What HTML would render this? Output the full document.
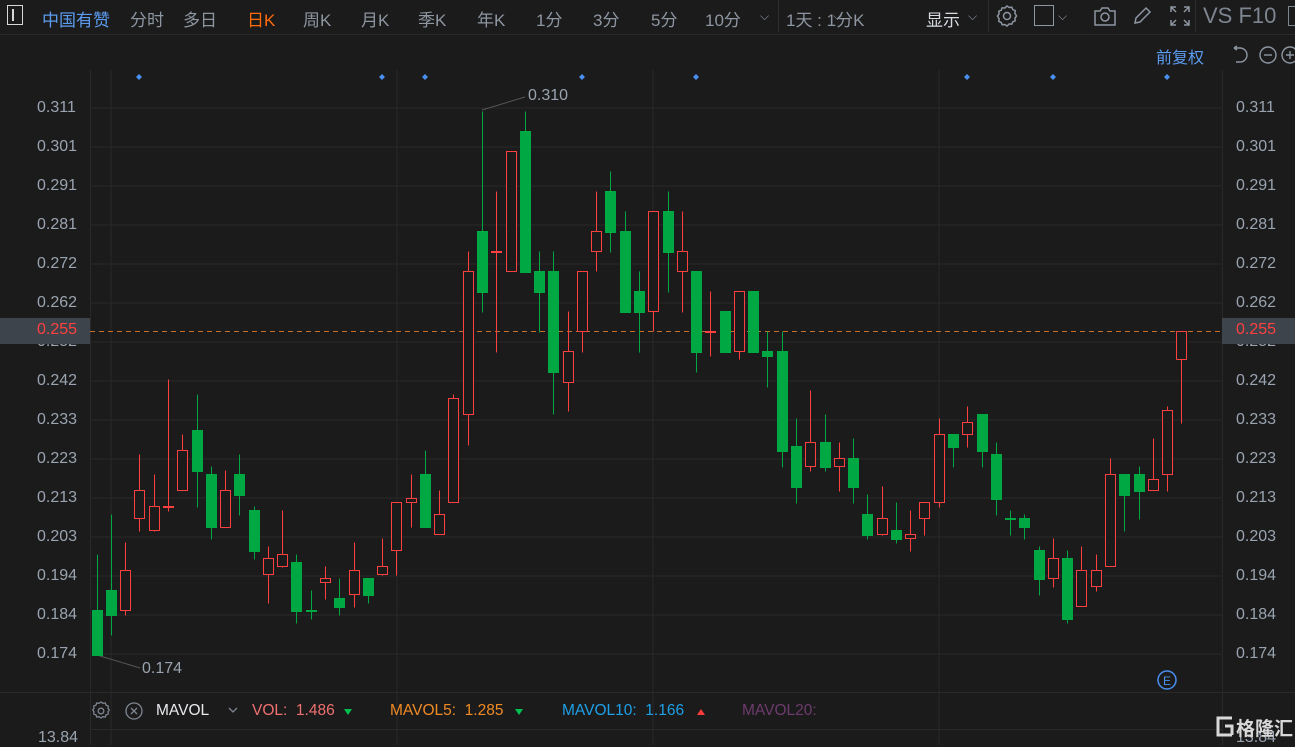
<!DOCTYPE html>
<html><head><meta charset="utf-8"><style>
*{margin:0;padding:0;box-sizing:border-box}
body{width:1295px;height:745px;background:#1b1b1b;overflow:hidden;position:relative;font-family:"Liberation Sans","Noto Sans CJK SC",sans-serif;color:#9aa3ae}
.t{position:absolute;white-space:nowrap}
.top{font-size:17px;top:6px;color:#8d96a1}
.ax{font-size:16px;color:#9aa4b0}
</style></head><body>
<div style="position:absolute;left:0;top:34px;width:1295px;height:1px;background:#2a2a2a"></div>
<div style="position:absolute;left:7px;top:5px;width:16px;height:20px;border:1.5px solid #d8d8d8"></div>
<div style="position:absolute;left:12px;top:9px;width:1.5px;height:12px;background:#d8d8d8"></div>
<div class="t top" style="left:42px;color:#5b9cf0">中国有赞</div>
<div class="t top" style="left:130px">分时</div>
<div class="t top" style="left:183px">多日</div>
<div class="t top" style="left:247px;color:#ff6a0a">日K</div>
<div class="t top" style="left:303px">周K</div>
<div class="t top" style="left:361px">月K</div>
<div class="t top" style="left:418px">季K</div>
<div class="t top" style="left:477px">年K</div>
<div class="t top" style="left:536px">1分</div>
<div class="t top" style="left:593px">3分</div>
<div class="t top" style="left:651px">5分</div>
<div class="t top" style="left:705px">10分</div>
<div class="t top" style="left:760px;font-size:12px;top:9px">⌵</div>
<div style="position:absolute;left:778px;top:0;width:1px;height:32px;background:#2e2e2e"></div>
<div class="t top" style="left:786px">1天 : 1分K</div>
<div class="t top" style="left:833px;font-size:12px;top:9px">⌵</div>
<div class="t top" style="left:926px;color:#d8dce2">显示</div>
<div class="t top" style="left:968px;font-size:12px;top:9px">⌵</div>
<div style="position:absolute;left:988px;top:0;width:1px;height:32px;background:#2e2e2e"></div>
<svg style="position:absolute;left:995px;top:4px" width="24" height="24" viewBox="0 0 24 24" fill="none" stroke="#8d96a1" stroke-width="1.5"><path d="M12 2l2.2 1.5 2.6-.3 1 2.4 2.4 1-.3 2.6L21.5 12l-1.6 2.2.3 2.6-2.4 1-1 2.4-2.6-.3L12 22l-2.2-1.5-2.6.3-1-2.4-2.4-1 .3-2.6L2.5 12l1.6-2.2-.3-2.6 2.4-1 1-2.4 2.6.3z"/><circle cx="12" cy="12" r="3.5"/></svg>
<div style="position:absolute;left:1034px;top:5px;width:20px;height:21px;border:1.5px solid #8d96a1"></div>
<div class="t top" style="left:1058px;font-size:12px;top:9px">⌵</div>
<svg style="position:absolute;left:1093px;top:5px" width="24" height="22" viewBox="0 0 24 22" fill="none" stroke="#8d96a1" stroke-width="1.5"><path d="M2 6h5l2-3h6l2 3h5v14H2z"/><circle cx="12" cy="12" r="4"/></svg>
<svg style="position:absolute;left:1131px;top:5px" width="22" height="22" viewBox="0 0 22 22" fill="none" stroke="#8d96a1" stroke-width="1.5"><path d="M4 18l1-5L15 3l4 4L9 17z"/></svg>
<svg style="position:absolute;left:1169px;top:5px" width="22" height="22" viewBox="0 0 22 22" fill="none" stroke="#8d96a1" stroke-width="1.5"><path d="M2 7V2h5M2 2l5 5M20 7V2h-5M20 2l-5 5M2 15v5h5M2 20l5-5M20 15v5h-5M20 20l-5-5"/></svg>
<div style="position:absolute;left:1195px;top:0;width:1px;height:32px;background:#2e2e2e"></div>
<div class="t" style="left:1203px;top:3px;font-size:22px;color:#7d8590">VS F10</div>
<div style="position:absolute;left:1288px;top:6px;width:12px;height:20px;border:1.5px solid #7d8590"></div>

<div class="t" style="left:1156px;top:44px;font-size:16px;color:#5b9cf0">前复权</div>
<svg style="position:absolute;left:1228px;top:44px" width="70" height="22" viewBox="0 0 70 22" fill="none" stroke="#8d96a1" stroke-width="1.4"><path d="M6 4h6a7 7 0 0 1 0 14H8"/><path d="M6 4l3-2M6 4l3 2"/><circle cx="40" cy="11" r="8"/><path d="M36 11h8"/><circle cx="62" cy="11" r="8"/><path d="M58 11h8M62 7v8"/></svg>

<svg style="position:absolute;left:0;top:0" width="1295" height="745">
<g stroke="#292929" stroke-width="1" shape-rendering="crispEdges">
<line x1="90" y1="108" x2="1222" y2="108"/><line x1="90" y1="147" x2="1222" y2="147"/><line x1="90" y1="186" x2="1222" y2="186"/><line x1="90" y1="225" x2="1222" y2="225"/><line x1="90" y1="264" x2="1222" y2="264"/><line x1="90" y1="303" x2="1222" y2="303"/><line x1="90" y1="342" x2="1222" y2="342"/><line x1="90" y1="381" x2="1222" y2="381"/><line x1="90" y1="420" x2="1222" y2="420"/><line x1="90" y1="459" x2="1222" y2="459"/><line x1="90" y1="498" x2="1222" y2="498"/><line x1="90" y1="537" x2="1222" y2="537"/><line x1="90" y1="576" x2="1222" y2="576"/><line x1="90" y1="615" x2="1222" y2="615"/><line x1="90" y1="654" x2="1222" y2="654"/>
<line x1="111" y1="70" x2="111" y2="745"/><line x1="397" y1="70" x2="397" y2="745"/><line x1="653" y1="70" x2="653" y2="745"/><line x1="939" y1="70" x2="939" y2="745"/>
<line x1="90.5" y1="70" x2="90.5" y2="745"/><line x1="1222.5" y1="70" x2="1222.5" y2="745"/>
<line x1="0" y1="692.5" x2="1295" y2="692.5"/><line x1="90" y1="729.5" x2="1222" y2="729.5"/>
</g>
<g fill="#4a8ff0">
<path d="M139 74l3 3-3 3-3-3z"/><path d="M382 74l3 3-3 3-3-3z"/><path d="M425 74l3 3-3 3-3-3z"/><path d="M582 74l3 3-3 3-3-3z"/><path d="M696 74l3 3-3 3-3-3z"/><path d="M967 74l3 3-3 3-3-3z"/><path d="M1053 74l3 3-3 3-3-3z"/><path d="M1167 74l3 3-3 3-3-3z"/>
</g>
<line x1="0" y1="331.5" x2="1222" y2="331.5" stroke="#c8702a" stroke-dasharray="5,4" stroke-width="1"/>
<line x1="482" y1="110" x2="525" y2="97" stroke="#555"/>
<line x1="97" y1="655" x2="140" y2="668" stroke="#555"/>
<g stroke="#00a843" stroke-width="1" fill="#00a843" shape-rendering="crispEdges" transform="translate(0.5,0.5)">
<line x1="97" y1="554" x2="97" y2="655"/><rect x="92" y="610" width="10" height="45"/>
<line x1="111" y1="514" x2="111" y2="635"/><rect x="106" y="590" width="10" height="25"/>
<line x1="197" y1="394" x2="197" y2="507"/><rect x="192" y="430" width="10" height="41"/>
<line x1="211" y1="466" x2="211" y2="539"/><rect x="206" y="474" width="10" height="53"/>
<line x1="239" y1="454" x2="239" y2="515"/><rect x="234" y="474" width="10" height="21"/>
<line x1="254" y1="506" x2="254" y2="559"/><rect x="249" y="510" width="10" height="41"/>
<line x1="296" y1="554" x2="296" y2="623"/><rect x="291" y="562" width="10" height="49"/>
<line x1="311" y1="590" x2="311" y2="619"/><rect x="306" y="610" width="10" height="1"/>
<line x1="339" y1="578" x2="339" y2="615"/><rect x="334" y="598" width="10" height="9"/>
<line x1="368" y1="578" x2="368" y2="603"/><rect x="363" y="578" width="10" height="17"/>
<line x1="425" y1="450" x2="425" y2="527"/><rect x="420" y="474" width="10" height="53"/>
<line x1="482" y1="111" x2="482" y2="312"/><rect x="477" y="231" width="10" height="61"/>
<line x1="525" y1="111" x2="525" y2="272"/><rect x="520" y="131" width="10" height="141"/>
<line x1="539" y1="251" x2="539" y2="332"/><rect x="534" y="271" width="10" height="21"/>
<line x1="553" y1="251" x2="553" y2="414"/><rect x="548" y="271" width="10" height="101"/>
<line x1="610" y1="171" x2="610" y2="252"/><rect x="605" y="191" width="10" height="41"/>
<line x1="625" y1="211" x2="625" y2="312"/><rect x="620" y="231" width="10" height="81"/>
<line x1="639" y1="271" x2="639" y2="352"/><rect x="634" y="291" width="10" height="21"/>
<line x1="668" y1="191" x2="668" y2="292"/><rect x="663" y="211" width="10" height="41"/>
<line x1="696" y1="271" x2="696" y2="372"/><rect x="691" y="271" width="10" height="81"/>
<rect x="720" y="311" width="10" height="41"/>
<rect x="748" y="291" width="10" height="61"/>
<line x1="767" y1="331" x2="767" y2="387"/><rect x="762" y="351" width="10" height="5"/>
<line x1="782" y1="331" x2="782" y2="467"/><rect x="777" y="351" width="10" height="100"/>
<line x1="796" y1="418" x2="796" y2="503"/><rect x="791" y="446" width="10" height="41"/>
<line x1="825" y1="414" x2="825" y2="471"/><rect x="820" y="442" width="10" height="25"/>
<line x1="853" y1="438" x2="853" y2="503"/><rect x="848" y="458" width="10" height="29"/>
<line x1="867" y1="494" x2="867" y2="539"/><rect x="862" y="514" width="10" height="21"/>
<line x1="896" y1="502" x2="896" y2="543"/><rect x="891" y="530" width="10" height="9"/>
<line x1="953" y1="434" x2="953" y2="467"/><rect x="948" y="434" width="10" height="13"/>
<line x1="982" y1="414" x2="982" y2="467"/><rect x="977" y="414" width="10" height="37"/>
<line x1="996" y1="442" x2="996" y2="515"/><rect x="991" y="454" width="10" height="45"/>
<line x1="1010" y1="510" x2="1010" y2="535"/><rect x="1005" y="518" width="10" height="1"/>
<line x1="1024" y1="514" x2="1024" y2="539"/><rect x="1019" y="518" width="10" height="9"/>
<line x1="1039" y1="546" x2="1039" y2="595"/><rect x="1034" y="550" width="10" height="29"/>
<line x1="1067" y1="550" x2="1067" y2="623"/><rect x="1062" y="558" width="10" height="61"/>
<line x1="1124" y1="474" x2="1124" y2="531"/><rect x="1119" y="474" width="10" height="21"/>
<line x1="1139" y1="466" x2="1139" y2="519"/><rect x="1134" y="474" width="10" height="17"/>
</g>
<g stroke="#ff4040" stroke-width="1" fill="#1b1b1b" shape-rendering="crispEdges" transform="translate(0.5,0.5)">
<line x1="125" y1="542" x2="125" y2="615"/><rect x="120" y="570" width="10" height="40"/>
<line x1="139" y1="454" x2="139" y2="531"/><rect x="134" y="490" width="10" height="28"/>
<line x1="154" y1="474" x2="154" y2="531"/><rect x="149" y="506" width="10" height="24"/>
<line x1="168" y1="379" x2="168" y2="511"/><rect x="163" y="506" width="10" height="1"/>
<line x1="182" y1="434" x2="182" y2="490"/><rect x="177" y="450" width="10" height="40"/>
<line x1="225" y1="470" x2="225" y2="527"/><rect x="220" y="490" width="10" height="37"/>
<line x1="268" y1="546" x2="268" y2="603"/><rect x="263" y="558" width="10" height="16"/>
<line x1="282" y1="510" x2="282" y2="567"/><rect x="277" y="554" width="10" height="12"/>
<line x1="325" y1="566" x2="325" y2="599"/><rect x="320" y="578" width="10" height="4"/>
<line x1="354" y1="542" x2="354" y2="607"/><rect x="349" y="570" width="10" height="24"/>
<line x1="382" y1="538" x2="382" y2="575"/><rect x="377" y="566" width="10" height="8"/>
<line x1="396" y1="502" x2="396" y2="575"/><rect x="391" y="502" width="10" height="48"/>
<line x1="411" y1="474" x2="411" y2="527"/><rect x="406" y="498" width="10" height="4"/>
<line x1="439" y1="490" x2="439" y2="534"/><rect x="434" y="514" width="10" height="20"/>
<line x1="453" y1="394" x2="453" y2="502"/><rect x="448" y="398" width="10" height="104"/>
<line x1="468" y1="251" x2="468" y2="445"/><rect x="463" y="271" width="10" height="143"/>
<line x1="496" y1="191" x2="496" y2="352"/><rect x="491" y="251" width="10" height="1"/>
<rect x="506" y="151" width="10" height="120"/>
<line x1="568" y1="311" x2="568" y2="411"/><rect x="563" y="351" width="10" height="31"/>
<line x1="582" y1="271" x2="582" y2="352"/><rect x="577" y="271" width="10" height="60"/>
<line x1="596" y1="191" x2="596" y2="271"/><rect x="591" y="231" width="10" height="20"/>
<line x1="653" y1="211" x2="653" y2="331"/><rect x="648" y="211" width="10" height="100"/>
<line x1="682" y1="211" x2="682" y2="312"/><rect x="677" y="251" width="10" height="20"/>
<line x1="710" y1="291" x2="710" y2="356"/><rect x="705" y="331" width="10" height="1"/>
<line x1="739" y1="291" x2="739" y2="359"/><rect x="734" y="291" width="10" height="60"/>
<line x1="810" y1="390" x2="810" y2="471"/><rect x="805" y="442" width="10" height="24"/>
<line x1="839" y1="442" x2="839" y2="491"/><rect x="834" y="458" width="10" height="8"/>
<line x1="882" y1="486" x2="882" y2="535"/><rect x="877" y="518" width="10" height="16"/>
<line x1="910" y1="510" x2="910" y2="551"/><rect x="905" y="534" width="10" height="4"/>
<line x1="924" y1="502" x2="924" y2="535"/><rect x="919" y="502" width="10" height="16"/>
<line x1="939" y1="418" x2="939" y2="507"/><rect x="934" y="434" width="10" height="68"/>
<line x1="967" y1="406" x2="967" y2="447"/><rect x="962" y="422" width="10" height="12"/>
<line x1="1053" y1="538" x2="1053" y2="587"/><rect x="1048" y="558" width="10" height="20"/>
<line x1="1081" y1="546" x2="1081" y2="606"/><rect x="1076" y="570" width="10" height="36"/>
<line x1="1096" y1="554" x2="1096" y2="591"/><rect x="1091" y="570" width="10" height="16"/>
<line x1="1110" y1="458" x2="1110" y2="566"/><rect x="1105" y="474" width="10" height="92"/>
<line x1="1153" y1="438" x2="1153" y2="490"/><rect x="1148" y="479" width="10" height="11"/>
<line x1="1167" y1="406" x2="1167" y2="491"/><rect x="1162" y="410" width="10" height="64"/>
<line x1="1181" y1="331" x2="1181" y2="423"/><rect x="1176" y="331" width="10" height="28"/>
</g>
<circle cx="1167" cy="680" r="9" fill="none" stroke="#4a8ff0" stroke-width="1.5"/>
<text x="1167" y="685" fill="#4a8ff0" font-size="12" text-anchor="middle" font-family="Liberation Sans">E</text>
<g fill="none" stroke="#7d8590" stroke-width="1.3">
<path d="M101 702l2 1.3 2.3-.3.8 2.2 2.2.8-.3 2.3 1.3 1.7-1.3 1.7.3 2.3-2.2.8-.8 2.2-2.3-.3-2 1.3-2-1.3-2.3.3-.8-2.2-2.2-.8.3-2.3-1.3-1.7 1.3-1.7-.3-2.3 2.2-.8.8-2.2 2.3.3z"/><circle cx="101" cy="711" r="2.8"/>
<circle cx="134" cy="711" r="8"/><path d="M131 708l6 6M137 708l-6 6"/>
<path d="M229 708l4 4 4-4"/>
</g>
<path d="M344 709h8l-4 6z" fill="#00c050"/><path d="M515 709h8l-4 6z" fill="#00c050"/><path d="M697 715h8l-4-6z" fill="#ff3b3b"/>
<path d="M1232 718h-14v17h14" fill="none" stroke="#d8d8d8" stroke-width="3"/><path d="M1225 726h7v9" fill="none" stroke="#d8d8d8" stroke-width="3"/>
</svg>
<div class="t ax" style="left:37px;top:99px">0.311</div><div class="t ax" style="left:1236px;top:99px">0.311</div>
<div class="t ax" style="left:37px;top:138px">0.301</div><div class="t ax" style="left:1236px;top:138px">0.301</div>
<div class="t ax" style="left:37px;top:177px">0.291</div><div class="t ax" style="left:1236px;top:177px">0.291</div>
<div class="t ax" style="left:37px;top:216px">0.281</div><div class="t ax" style="left:1236px;top:216px">0.281</div>
<div class="t ax" style="left:37px;top:255px">0.272</div><div class="t ax" style="left:1236px;top:255px">0.272</div>
<div class="t ax" style="left:37px;top:294px">0.262</div><div class="t ax" style="left:1236px;top:294px">0.262</div>
<div class="t ax" style="left:37px;top:333px">0.252</div><div class="t ax" style="left:1236px;top:333px">0.252</div>
<div class="t ax" style="left:37px;top:372px">0.242</div><div class="t ax" style="left:1236px;top:372px">0.242</div>
<div class="t ax" style="left:37px;top:411px">0.233</div><div class="t ax" style="left:1236px;top:411px">0.233</div>
<div class="t ax" style="left:37px;top:450px">0.223</div><div class="t ax" style="left:1236px;top:450px">0.223</div>
<div class="t ax" style="left:37px;top:489px">0.213</div><div class="t ax" style="left:1236px;top:489px">0.213</div>
<div class="t ax" style="left:37px;top:528px">0.203</div><div class="t ax" style="left:1236px;top:528px">0.203</div>
<div class="t ax" style="left:37px;top:567px">0.194</div><div class="t ax" style="left:1236px;top:567px">0.194</div>
<div class="t ax" style="left:37px;top:606px">0.184</div><div class="t ax" style="left:1236px;top:606px">0.184</div>
<div class="t ax" style="left:37px;top:645px">0.174</div><div class="t ax" style="left:1236px;top:645px">0.174</div>
<div style="position:absolute;left:0;top:318px;width:90px;height:26px;background:#3d444b"></div>
<div class="t ax" style="left:37px;top:321px;color:#ff4040">0.255</div>
<div style="position:absolute;left:1222px;top:318px;width:73px;height:26px;background:#3d444b"></div>
<div class="t ax" style="left:1236px;top:321px;color:#ff4040">0.255</div>
<div class="t ax" style="left:528px;top:87px">0.310</div>
<div class="t ax" style="left:142px;top:660px">0.174</div>
<div class="t" style="left:156px;top:702px;font-size:15.5px;color:#e8eaee">MAVOL</div>
<div class="t" style="left:252px;top:702px;font-size:15.5px;color:#f07070">VOL:&nbsp;&nbsp;1.486</div>
<div class="t" style="left:390px;top:702px;font-size:15.5px;color:#f08a24">MAVOL5:&nbsp;&nbsp;1.285</div>
<div class="t" style="left:562px;top:702px;font-size:15.5px;color:#1ea0e6">MAVOL10:&nbsp;&nbsp;1.166</div>
<div class="t" style="left:742px;top:702px;font-size:15.5px;color:#6e3b6e">MAVOL20:</div>
<div class="t ax" style="left:38px;top:729px">13.84</div>
<div class="t ax" style="left:1236px;top:729px">13.84</div>
<div class="t" style="left:1236px;top:714px;font-size:19px;color:#d8d8d8;font-weight:bold">格隆汇</div>
</body></html>
